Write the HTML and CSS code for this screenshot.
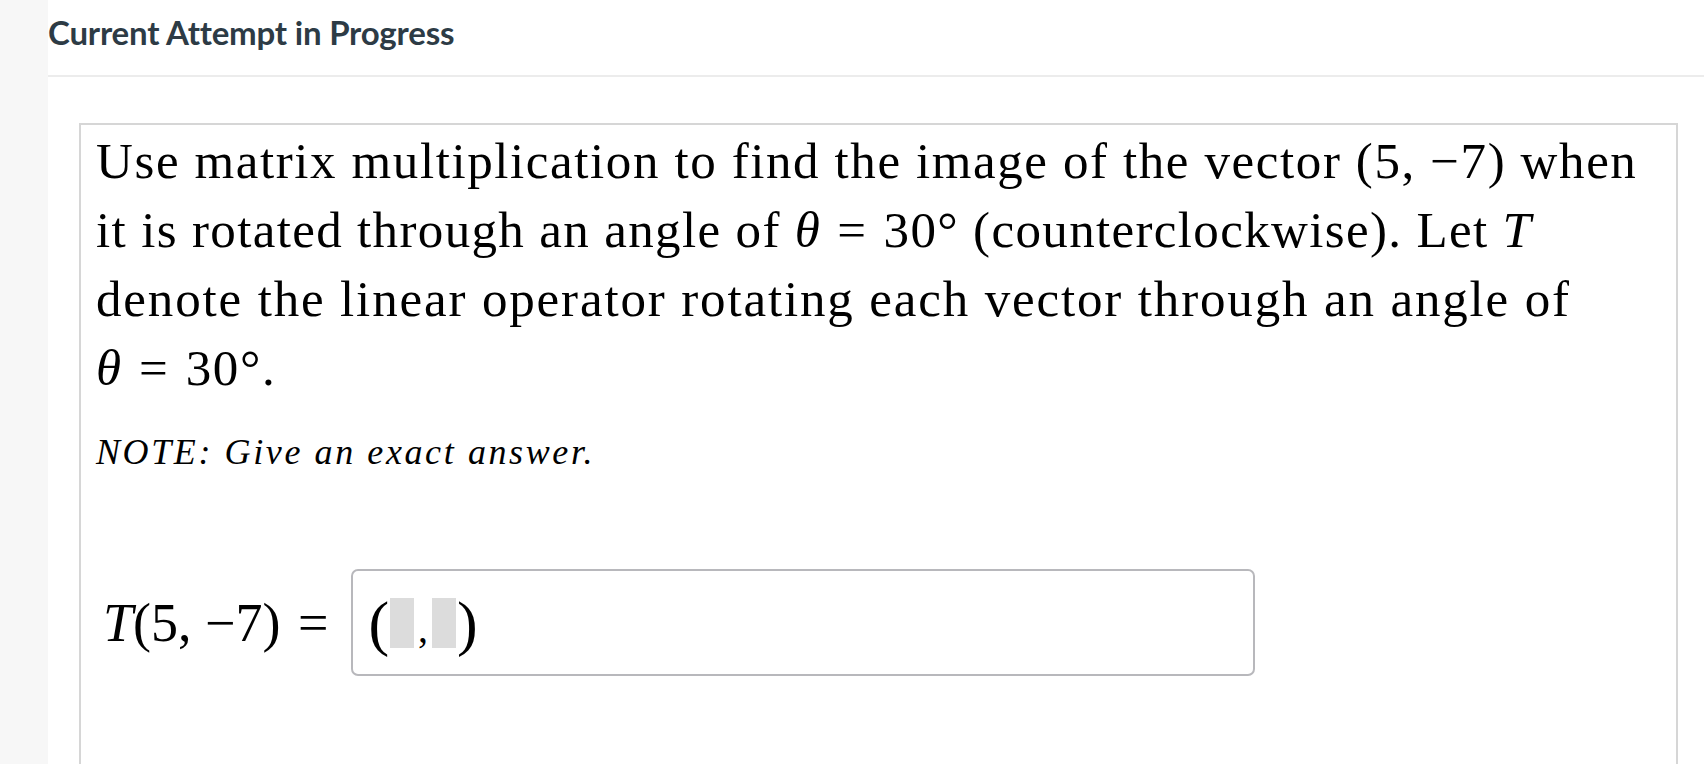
FILE: index.html
```html
<!DOCTYPE html>
<html>
<head>
<meta charset="utf-8">
<link rel="stylesheet" href="styles.css">
</head>
<body>
<div class="page">
  <aside class="rail"></aside>
  <main class="main">
    <header class="head"><h1 class="title">Current Attempt in Progress</h1></header>
    <section class="question">
      <p class="prompt">Use matrix multiplication to find the image of the vector (5, −7) when<br><span class="tight">it is rotated through an angle of <i>θ</i> <span class="op">=</span> 30° (counterclockwise). Let <i>T</i></span><br><span class="loose">denote the linear operator rotating each vector through an angle of</span><br><i>θ</i> <span class="op">=</span> 30°.</p>
      <p class="note">NOTE: Give an exact answer.</p>
      <div class="answer">
        <span class="lhs"><i>T</i>(5, −7) <span class="op">=</span></span>
        <div class="field">
          <span class="paren">(</span><span class="slot"></span><span class="comma">,</span><span class="slot"></span><span class="paren">)</span>
        </div>
      </div>
    </section>
  </main>
</div>
</body>
</html>
```
FILE: styles.css
```css
html, body {
  margin: 0;
  padding: 0;
  background: #fff;
  height: 100%;
  overflow: hidden;
}
.page {
  display: flex;
  height: 764px;
}
.rail {
  width: 48px;
  flex: none;
  background: #f7f7f7;
}
.main {
  flex: 1;
  display: flex;
  flex-direction: column;
  min-width: 0;
}
.head {
  height: 75px;
  border-bottom: 2px solid #ececec;
  display: flex;
  align-items: flex-start;
}
.title {
  margin: 13px 0 0 0;
  font-family: Lato, "Noto Sans", sans-serif;
  font-weight: 700;
  font-size: 33px;
  line-height: 38px;
  color: #2d3b45;
  letter-spacing: -0.2px;
}
.question {
  margin: 46px 26px 0 31px;
  border: 2px solid #d6d6d6;
  border-bottom: none;
  flex: 1;
  padding: 2px 0 0 15px;
  font-family: "Liberation Serif", "Times New Roman", serif;
  color: #000;
}
.prompt {
  margin: 0;
  font-size: 51px;
  line-height: 69px;
  letter-spacing: 1.6px;
}
.tight {
  letter-spacing: 1.35px;
}
.loose {
  letter-spacing: 1.85px;
}
.prompt i, .lhs i {
  font-style: italic;
}
.op {
  padding: 0 2px;
}
.note {
  margin: 29px 0 0 0;
  font-size: 36px;
  line-height: 40px;
  font-style: italic;
  letter-spacing: 2.6px;
}
.answer {
  margin-top: 97px;
  display: flex;
  align-items: center;
  gap: 19px;
  padding-left: 7px;
}
.lhs {
  font-size: 54px;
  line-height: 60px;
}
.lhs .op {
  padding: 0 4px;
}
.field {
  width: 904px;
  height: 107px;
  border: 2px solid #b8b8bc;
  border-radius: 7px;
  display: flex;
  align-items: center;
  padding-left: 15px;
  font-size: 62px;
  box-sizing: border-box;
}
.paren {
  line-height: 60px;
}
.slot {
  display: inline-block;
  width: 24px;
  height: 50px;
  background: #dcdcdc;
  margin: 0 1px;
}
.comma {
  font-size: 40px;
  margin: 12px 3px 0;
}
```
